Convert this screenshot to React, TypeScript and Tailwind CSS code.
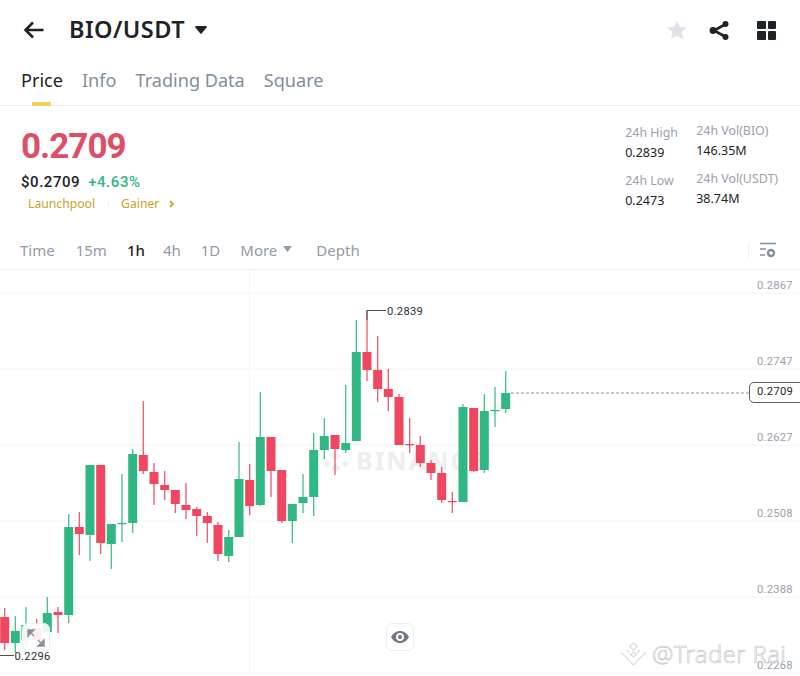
import React from 'react';

const PLEX = "font-['Noto_Sans','Open_Sans',sans-serif]";
const DIN = "font-['Roboto','Liberation_Sans',sans-serif]";

// [x, wickTop, wickBottom, bodyTop, bodyBottom, up]
type Candle = [number, number, number, number, number, boolean];

const candles: Candle[] = [
  [4.7, 608, 650, 617, 643, false],
  [15.3, 616, 653, 631, 643, true],
  [26, 607, 645, 625, 640, true],
  [36.7, 619, 650, 628, 640, false],
  [47.3, 597, 632, 613, 632, true],
  [58, 607, 633, 612, 615, false],
  [68.7, 514, 623, 527, 615, true],
  [79.3, 512, 555, 527, 534, false],
  [90, 465, 561, 465, 535, true],
  [100.7, 465, 554, 465, 543, false],
  [111.3, 524, 569, 524, 544, true],
  [122, 474, 542, 523, 524, true],
  [132.7, 449, 533, 454, 523, true],
  [143.3, 401, 474, 455, 471, false],
  [154, 463, 505, 472, 484, false],
  [164.7, 471, 500, 485, 490, false],
  [175.3, 490, 513, 490, 504, false],
  [186, 483, 519, 505, 510, false],
  [196.7, 507, 536, 509, 516, false],
  [207.3, 512, 543, 516, 523, false],
  [218, 522, 561, 525, 554, false],
  [228.7, 530, 562, 537, 556, true],
  [239, 442, 537, 479, 537, true],
  [249.7, 464, 515, 480, 506, false],
  [260.3, 392, 506, 437, 505, true],
  [271, 437, 497, 437, 471, false],
  [281.7, 470, 523, 470, 521, false],
  [292.3, 504, 543, 504, 521, true],
  [303, 474, 513, 497, 503, true],
  [313.7, 433, 516, 450, 497, true],
  [324.3, 418, 459, 436, 450, true],
  [335, 435, 475, 435, 449, false],
  [345.7, 385, 453, 443, 450, true],
  [356.3, 320, 441, 352, 441, true],
  [367, 310, 381, 352, 370, false],
  [377.7, 336, 402, 370, 389, false],
  [388.3, 369, 411, 389, 397, false],
  [399, 394, 445, 397, 445, false],
  [409.7, 418, 453, 444, 445, false],
  [420.3, 436, 467, 445, 463, false],
  [431, 460, 480, 463, 473, false],
  [441.7, 467, 503, 473, 500, false],
  [452.3, 492, 513, 501, 502, false],
  [463, 404, 502, 407, 502, true],
  [473.7, 408, 472, 408, 471, false],
  [484.3, 394, 473, 411, 470, true],
  [495, 387, 427, 410, 411, true],
  [505.7, 371, 413, 393, 409, true],
];

const axis = [
  { y: 293, label: '0.2867' },
  { y: 369, label: '0.2747' },
  { y: 445, label: '0.2627' },
  { y: 521, label: '0.2508' },
  { y: 597, label: '0.2388' },
  { y: 673, label: '0.2268' },
];

const tabs = ['Info', 'Trading Data', 'Square'];

const Stat = ({ label, value }: { label: string; value: string }) => (
  <div>
    <p className="text-[12.4px] leading-[18px] text-[#9aa1ac]">{label}</p>
    <p className={`${PLEX} mt-[2px] text-[12.5px] leading-[18px] text-[#1e2329]`}>{value}</p>
  </div>
);

const Chart = () => (
  <svg viewBox="0 270 800 406" className="block h-[406px] w-[800px]">
    {axis.map((a) => (
      <line key={a.y} x1="0" x2="800" y1={a.y} y2={a.y} stroke="#f3f4f6" />
    ))}
    <line x1="249.5" x2="249.5" y1="270" y2="676" stroke="#f3f4f6" />

    {/* watermark */}
    <path d="M336 451l5 5-5 5-5-5zM327 460l4 4-4 4-4-4zM345 460l4 4-4 4-4-4zM336 463l5 5-5 5-5-5z" fill="#eef0f2" />
    <text x="356" y="470" fontSize="25" fontWeight="700" letterSpacing="2" fill="#eceef0" fontFamily="Noto Sans">BINANCE</text>

    {candles.map(([x, wt, wb, bt, bb, up]) => {
      const color = up ? '#2fb884' : '#f0465f';
      return (
        <g key={x}>
          <line x1={x} x2={x} y1={wt} y2={wb} stroke={color} strokeWidth="1.3" opacity="0.9" />
          <rect x={x - 4.5} y={bt} width="9" height={Math.max(bb - bt, 1.2)} fill={color} />
        </g>
      );
    })}

    {/* high / low markers */}
    <path d="M367 320V310.5H386" fill="none" stroke="#4b5058" />
    <text x="387" y="314.5" fontSize="11.2" fill="#2b3036" fontFamily="Roboto" letterSpacing="0.3">0.2839</text>
    <line x1="0" x2="14" y1="655.5" y2="655.5" stroke="#4b5058" />
    <text x="14.5" y="660" fontSize="11.2" fill="#2b3036" fontFamily="Roboto" letterSpacing="0.3">0.2296</text>

    {/* last price */}
    <line x1="511" x2="749" y1="393" y2="393" stroke="#8e949c" strokeDasharray="3 2" />

    {axis.map((a) => (
      <text key={a.label} x="757" y={a.y - 4} fontSize="11.2" fill="#98a0aa" fontFamily="Roboto" letterSpacing="0.25">
        {a.label}
      </text>
    ))}
  </svg>
);

export default function App() {
  return (
    <div className={`${PLEX} relative h-[676px] w-[800px] overflow-hidden bg-white`}>
      {/* Top bar */}
      <header className="flex h-[60px] items-center pl-[23px] pr-[24px]">
        <svg width="21" height="18" viewBox="0 0 21 18" fill="none" stroke="#1e2329" strokeWidth="2.6">
          <path d="M20.5 9H3M10 1.5L2.5 9l7.5 7.5" />
        </svg>
        <h1 className="ml-[25px] text-[23.5px] font-semibold leading-none tracking-[0.45px] text-[#1e2329]">BIO/USDT</h1>
        <svg className="ml-[10px] mb-[1px]" width="12" height="8" viewBox="0 0 13 9" fill="#1e2329">
          <path d="M1 0h11a1 1 0 0 1 .8 1.6L7.2 8.3a1 1 0 0 1-1.5 0L.2 1.6A1 1 0 0 1 1 0z" />
        </svg>
        <div className="ml-auto flex items-center gap-[22px]">
          <svg width="20" height="20" viewBox="0 0 20 20" fill="#dfe2e6">
            <path d="M10 .5l2.9 6.3 6.8.7-5.1 4.6 1.5 6.8L10 15.4l-6.1 3.5 1.500-6.800L.3 7.500l6.8-.7z" />
          </svg>
          <svg width="21" height="21" viewBox="0 0 21 21" fill="#1e2329" stroke="#1e2329">
            <path d="M16 4.5L5 10.5l11 6" fill="none" strokeWidth="2.6" />
            <circle cx="16.5" cy="4" r="3" strokeWidth="0" />
            <circle cx="4" cy="10.5" r="3.4" strokeWidth="0" />
            <circle cx="16.5" cy="17" r="3" strokeWidth="0" />
          </svg>
          <div className="ml-[5px] grid h-[19px] w-[19px] grid-cols-2 gap-[2px]">
            <span className="rounded-[1px] bg-[#1e2329]" />
            <span className="rounded-[1px] bg-[#1e2329]" />
            <span className="rounded-[1px] bg-[#1e2329]" />
            <span className="rounded-[1px] bg-[#1e2329]" />
          </div>
        </div>
      </header>

      {/* Tabs */}
      <nav className="flex h-[46px] items-start gap-[19px] border-b border-[#eaecef] pl-[21px] pt-[6px] text-[18.1px] leading-[28px] text-[#848e9c]">
        <span className="relative h-[40px] text-[#1e2329]">
          Price
          <span className="absolute bottom-0 left-[11px] h-[4px] w-[19px] bg-[#f0d35c]" />
        </span>
        {tabs.map((t) => (
          <span key={t}>{t}</span>
        ))}
      </nav>

      {/* Price summary */}
      <section className="flex h-[124px] justify-between pl-[21px]">
        <div>
          <p className={`${DIN} mt-[20px] text-[35px] font-bold leading-[42px] tracking-[-1px] text-[#de4e66]`}>0.2709</p>
          <p className={`${DIN} mt-[4px] flex gap-[8px] text-[15px] font-medium leading-[20px] tracking-[0.55px]`}>
            <span className="text-[#1e2329]">$0.2709</span>
            <span className="text-[#33b586]">+4.63%</span>
          </p>
          <div className="mt-[3px] ml-[7px] flex items-center text-[12.2px] leading-[18px] text-[#c9a227]">
            <span>Launchpool</span>
            <span className="mx-[12.500px] h-[6px] w-px bg-[#eceef0]" />
            <span>Gainer</span>
            <svg className="ml-[10px]" width="6" height="8" viewBox="0 0 6 8" fill="none" stroke="#d4a72c" strokeWidth="1.8">
              <path d="M1 1l3 3-3 3" />
            </svg>
          </div>
        </div>
        <div className="flex gap-[21px] pr-[22px] pt-[16px]">
          <div className="flex w-[50px] flex-col gap-[10px] whitespace-nowrap pt-[2px]">
            <Stat label="24h High" value="0.2839" />
            <Stat label="24h Low" value="0.2473" />
          </div>
          <div className="flex flex-col gap-[10px] whitespace-nowrap">
            <Stat label="24h Vol(BIO)" value="146.35M" />
            <Stat label="24h Vol(USDT)" value="38.74M" />
          </div>
        </div>
      </section>

      {/* Interval bar */}
      <div className="flex h-[40px] items-center border-b border-[#eef0f2] pl-[20px] pr-[23px] pt-[1px] text-[15px] text-[#929aa5]">
        <span>Time</span>
        <span className="ml-[21px]">15m</span>
        <span className="ml-[20px] font-medium text-[#1e2329]">1h</span>
        <span className="ml-[18px]">4h</span>
        <span className="ml-[20px]">1D</span>
        <span className="ml-[20px]">More</span>
        <svg className="ml-[6px] mb-[3px]" width="9" height="6" viewBox="0 0 9 6" fill="#929aa5">
          <path d="M0 0h9L4.500 6z" />
        </svg>
        <span className="ml-[24px]">Depth</span>
        <span className="ml-auto h-[15px] w-px bg-[#eef0f2]" />
        <svg className="ml-[10px]" width="18" height="16" viewBox="0 0 18 16" fill="none" stroke="#848e9c" strokeWidth="1.7">
          <path d="M1 1.500h16M1 7h6M1 13h5" />
          <circle cx="12" cy="11" r="3" strokeWidth="2.4" />
        </svg>
      </div>

      {/* Chart */}
      <div className="relative">
        <Chart />

        <div className={`${DIN} absolute left-[749px] top-[112px] flex h-[21px] w-[60px] items-center rounded-[5px] border border-[#5a6068] bg-white pl-[7px] text-[11.2px] tracking-[0.3px] text-[#1e2329]`}>
          0.2709
        </div>

        <button className="absolute left-[22px] top-[353px] flex h-[29px] w-[28px] items-center justify-center rounded-[6px] border border-[#eceef0] bg-white/90">
          <svg width="18" height="18" viewBox="0 0 18 18" fill="#8b929c" stroke="#8b929c" strokeWidth="1.400">
            <path d="M1 1h6L1 7z" />
            <path d="M17 17h-6l6-6z" />
            <path d="M3 3l4 4M15 15l-4-4" />
          </svg>
        </button>

        <button className="absolute left-[386px] top-[353px] flex h-[28px] w-[28px] items-center justify-center rounded-[6px] border border-[#eceef0] bg-white">
          <svg width="18" height="12" viewBox="0 0 18 12" fill="#6f7782">
            <path d="M9 0c4 0 7 2.500 9 6-2 3.500-5 6-9 6s-7-2.500-9-6c2-3.500 5-6 9-6zm0 2a4 4 0 1 0 0 8 4 4 0 0 0 0-8zm0 2a2 2 0 1 1 0 4 2 2 0 0 1 0-4z" fillRule="evenodd" />
          </svg>
        </button>

        {/* Photo watermark */}
        <div className="absolute left-[620px] top-[371px] flex items-center gap-[5px]">
          <svg width="27" height="24" viewBox="0 0 27 24" fill="none" stroke="#c4c8cc" strokeWidth="1">
            <path d="M13.500 1l4 3.500-4 3.500-4-3.500zM7 8l2.500 2.500M20 8l-2.500 2.500M13.500 10l3 2.500-3 2.500-3-2.500zM1 10.500l3.500 3L13.500 23l9-9.500 3.500-3" />
          </svg>
          <span className="whitespace-nowrap text-[24px] font-light leading-[26px] tracking-[0.3px] text-white [-webkit-text-stroke:0.6px_#bfc3c8]">
            @Trader Rai
          </span>
        </div>
      </div>
    </div>
  );
}
